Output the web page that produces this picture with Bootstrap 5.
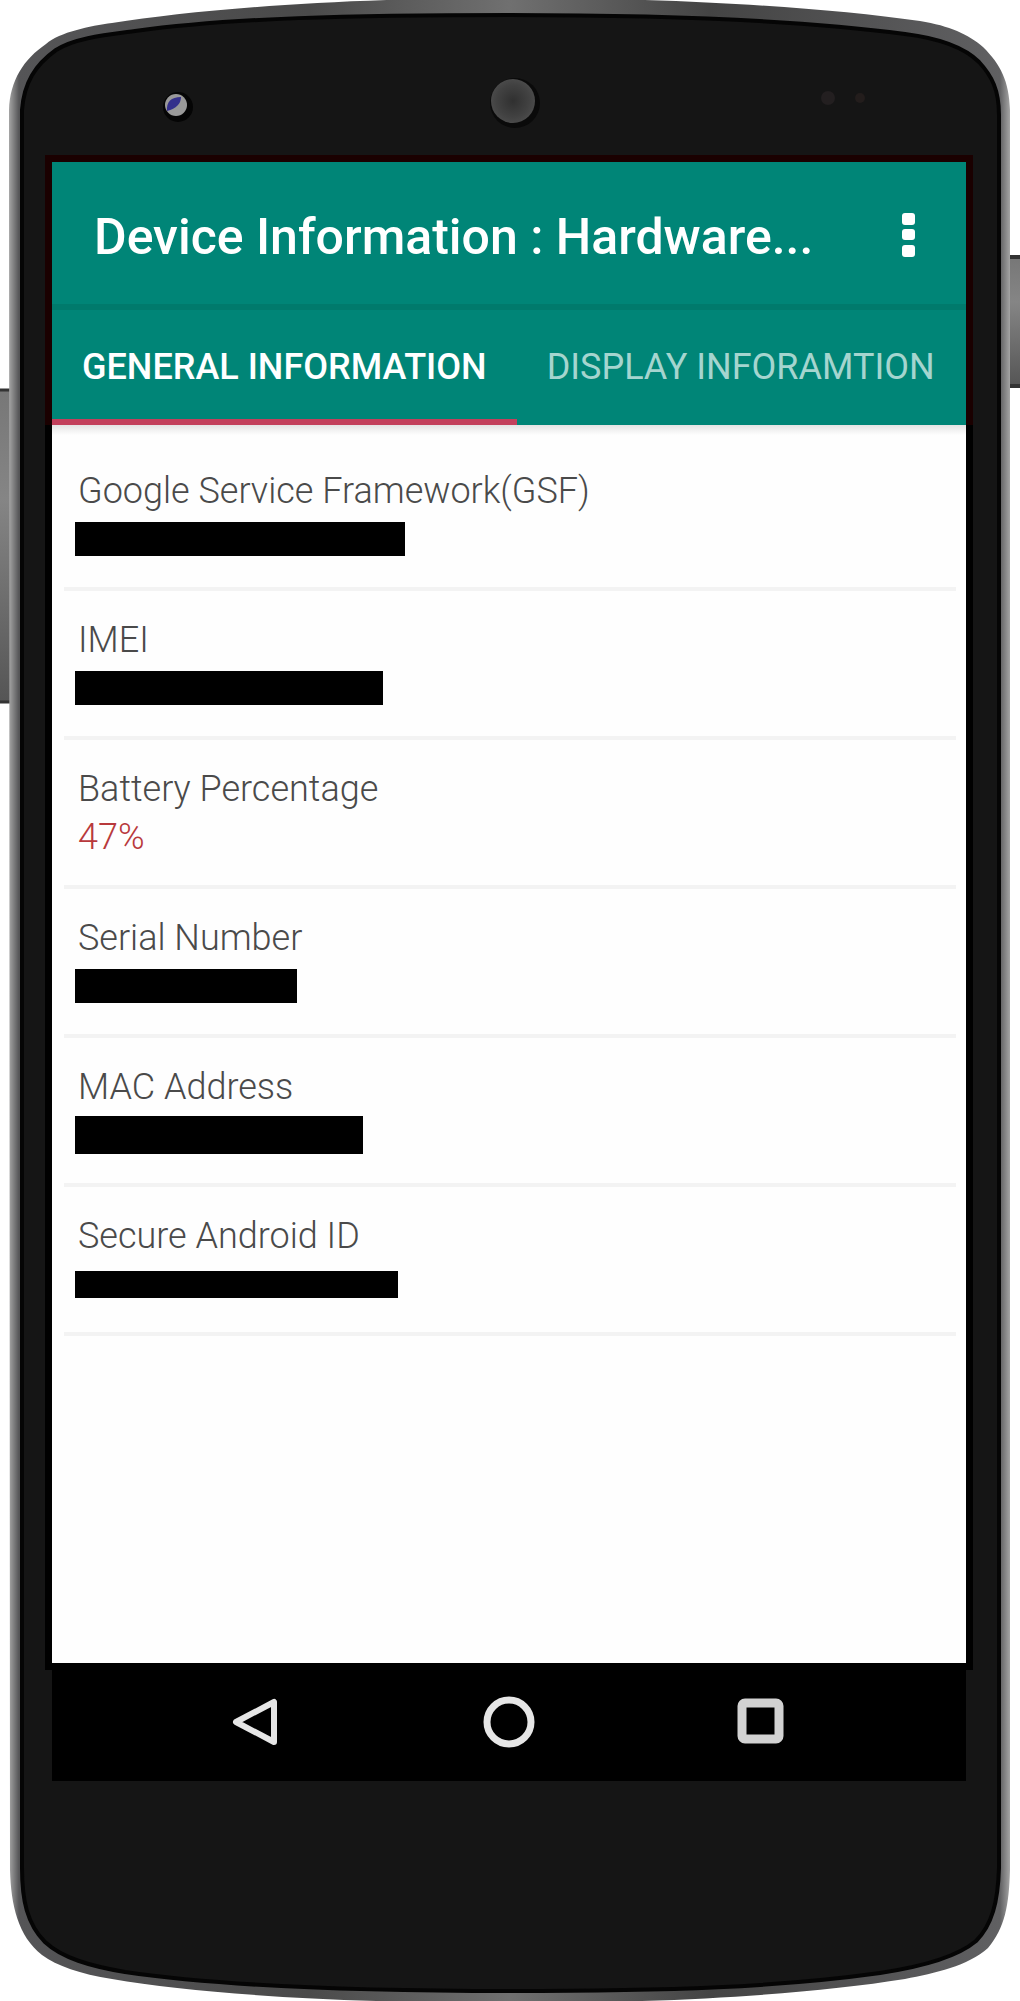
<!DOCTYPE html>
<html lang="en">
<head>
<meta charset="utf-8">
<meta name="viewport" content="width=device-width, initial-scale=1">
<title>Device Information : Hardware</title>
<link href="https://cdn.jsdelivr.net/npm/bootstrap@5.3.0/dist/css/bootstrap.min.css" rel="stylesheet">
<style>
  body { font-family: Roboto, "Liberation Sans", sans-serif; background: #fff; }
  .phone { min-height: 100vh; padding: 0 54px 0 52px; }
  .phone-shell { z-index: 0; }
  .phone-top, .screen, .soft-keys, .phone-chin { z-index: 1; }
  .phone-top { height: 162px; }
  .phone-top svg { height: 162px; }
  .phone-chin { height: 220px; }
  .screen { background: #fefefe; box-shadow: 0 0 0 7px #000; }
  .app-header { background: #008577; box-shadow: 0 0 0 7px #1a0000; clip-path: inset(-7px -7px 0 -7px); }
  .app-bar { height: 148px; padding: 8px 40px 0 42px; border-bottom: 6px solid #007a6c; }
  .app-title { font-size: 50px; line-height: 60px; font-weight: 500; color: #fff; }
  .menu-btn svg { width: 32px; height: 52px; }
  .tab-link { height: 115px; padding: 4px 30px 0; font-size: 36px; line-height: 40px; color: #a5d5cf; border-bottom: 6px solid transparent; }
  .tab-link:hover { color: #fff; }
  .tab-link.active { color: #fff; font-weight: 500; border-bottom-color: #c3405c; }
  .info-list { padding-top: 17px; background: linear-gradient(#e4e4e4, #fefefe 10px); }
  .info-row { margin: 0 10px 0 12px; padding: 25px 14px 24px; border-bottom: 4px solid #f3f3f3; }
  .info-name, .info-value { font-size: 36px; line-height: 48px; font-weight: 300; }
  .info-name { color: #4a4a4a; }
  .info-value { height: 48px; color: #b8393c; }
  .redacted { height: 34px; margin-left: -3px; background: #000; }
  .redacted-tall { height: 38px; }
  .redacted-thin { height: 27px; }
  .soft-keys { height: 118px; background: #000; padding: 0 130px; }
  .soft-keys svg { width: 54px; height: 54px; }
</style>
</head>
<body>
<div class="phone position-relative d-flex flex-column overflow-hidden">
  <svg class="phone-shell position-absolute top-0 start-0 w-100 h-100" viewBox="0 0 1020 2001" preserveAspectRatio="none" aria-hidden="true">
    <defs>
      <linearGradient id="rim" x1="0" x2="1" y1="0" y2="0">
        <stop offset="0" stop-color="#a5a5a5"/><stop offset=".01" stop-color="#555557"/>
        <stop offset=".3" stop-color="#4a4a4a"/><stop offset=".5" stop-color="#707070"/><stop offset=".7" stop-color="#444"/>
        <stop offset=".99" stop-color="#606062"/><stop offset="1" stop-color="#a5a5a5"/>
      </linearGradient>
      <linearGradient id="keys" x1="0" x2="0" y1="0" y2="1">
        <stop offset="0" stop-color="#777"/><stop offset=".35" stop-color="#858585"/><stop offset="1" stop-color="#555"/>
      </linearGradient>
    </defs>
    <rect x="-4" y="390" width="16" height="312" fill="url(#keys)" stroke="#333" stroke-width="3"/>
    <rect x="1008" y="257" width="16" height="129" fill="url(#keys)" stroke="#333" stroke-width="4"/>
    <path fill="url(#rim)" d="M9 110C10 80 24 59 46 44C60 32 90 26 112 23C200 9 340 -2 510 -2C680 -2 820 7 920 21C950 26 968 34 983 47C1001 65 1009 81 1010 110V1870C1009 1905 1005 1928 988 1948C968 1966 935 1973 905 1979C810 1994 680 2003 510 2003C340 2003 200 1994 112 1979C80 1974 57 1966 42 1955C18 1936 11 1905 10 1870Z"/>
    <path fill="#151515" stroke="#050505" stroke-width="4" d="M22 110C24 83 35 65 56 50C75 38 105 35 135 31C230 18 350 15 510 15C670 15 800 20 905 34C945 39 966 49 979 62C992 76 999 90 999 115V1868C998 1902 992 1925 976 1941C957 1957 920 1967 880 1973C780 1987 670 1991 510 1991C350 1991 220 1986 125 1972C90 1966 62 1958 45 1942C27 1924 22 1900 22 1868Z"/>
  </svg>

  <div class="phone-top position-relative">
    <svg class="w-100 d-block" viewBox="52 0 914 162" preserveAspectRatio="none" aria-hidden="true">
      <defs><radialGradient id="lens"><stop offset="0" stop-color="#303030"/><stop offset=".75" stop-color="#424242"/><stop offset="1" stop-color="#4a4a4a"/></radialGradient></defs>
      <circle cx="178" cy="107" r="15" fill="#050505"/>
      <circle cx="176" cy="105" r="11" fill="#999"/>
      <path d="M167 111Q166 97 181 97Q181 107 167 111Z" fill="#34308c"/>
      <circle cx="515" cy="103" r="25" fill="#0a0a0a"/>
      <circle cx="513" cy="101" r="22" fill="url(#lens)"/>
      <circle cx="828" cy="98" r="7" fill="#231f20"/>
      <circle cx="860" cy="98" r="5" fill="#231d1c"/>
    </svg>
  </div>

  <main class="screen position-relative flex-grow-1 d-flex flex-column">
    <header class="app-header">
      <div class="app-bar d-flex align-items-center justify-content-between">
        <h1 class="app-title text-truncate mb-0">Device Information : Hardware...</h1>
        <button type="button" class="menu-btn btn p-0 border-0 d-flex" aria-label="More options">
          <svg viewBox="0 0 32 52" fill="#fff" aria-hidden="true"><rect x="8" y="2" width="13" height="12" rx="3"/><rect x="8" y="18" width="13" height="11" rx="3"/><rect x="8" y="34" width="13" height="12" rx="3"/></svg>
        </button>
      </div>
      <nav class="d-flex" aria-label="Sections">
        <a class="tab-link active d-flex align-items-center text-decoration-none text-nowrap" href="#general" aria-current="page">GENERAL INFORMATION</a>
        <a class="tab-link flex-grow-1 d-flex align-items-center text-decoration-none text-nowrap" href="#display">DISPLAY INFORAMTION</a>
      </nav>
    </header>

    <dl id="general" class="info-list mb-0">
      <div class="info-row">
        <dt class="info-name">Google Service Framework(GSF)</dt>
        <dd class="info-value mb-0 d-flex align-items-center"><span class="redacted" style="width:330px"></span></dd>
      </div>
      <div class="info-row">
        <dt class="info-name">IMEI</dt>
        <dd class="info-value mb-0 d-flex align-items-center"><span class="redacted" style="width:308px"></span></dd>
      </div>
      <div class="info-row">
        <dt class="info-name">Battery Percentage</dt>
        <dd class="info-value mb-0 d-flex align-items-center">47%</dd>
      </div>
      <div class="info-row">
        <dt class="info-name">Serial Number</dt>
        <dd class="info-value mb-0 d-flex align-items-center"><span class="redacted" style="width:222px"></span></dd>
      </div>
      <div class="info-row">
        <dt class="info-name">MAC Address</dt>
        <dd class="info-value mb-0 d-flex align-items-center"><span class="redacted redacted-tall" style="width:288px"></span></dd>
      </div>
      <div class="info-row">
        <dt class="info-name">Secure Android ID</dt>
        <dd class="info-value mb-0 d-flex align-items-center"><span class="redacted redacted-thin" style="width:323px"></span></dd>
      </div>
    </dl>
  </main>

  <nav class="soft-keys position-relative d-flex align-items-center" aria-label="System">
    <div class="d-flex justify-content-between flex-grow-1 px-5">
      <button type="button" class="btn p-0 border-0 d-flex" aria-label="Back"><svg viewBox="0 0 54 54" fill="none" stroke="#e6e6e6" stroke-width="6" stroke-linejoin="round" aria-hidden="true"><path d="M44 7V47L6 27Z"/></svg></button>
      <button type="button" class="btn p-0 border-0 d-flex" aria-label="Home"><svg viewBox="0 0 54 54" fill="none" stroke="#e6e6e6" stroke-width="7" aria-hidden="true"><circle cx="27" cy="27" r="22"/></svg></button>
      <button type="button" class="btn p-0 border-0 d-flex" aria-label="Recent apps"><svg viewBox="0 0 54 54" fill="none" stroke="#d2d2d2" stroke-width="9" aria-hidden="true"><rect x="8" y="8" width="37" height="36" rx="3"/></svg></button>
    </div>
  </nav>
  <div class="phone-chin position-relative"></div>
</div>
<script src="https://cdn.jsdelivr.net/npm/bootstrap@5.3.0/dist/js/bootstrap.bundle.min.js"></script>
</body>
</html>
